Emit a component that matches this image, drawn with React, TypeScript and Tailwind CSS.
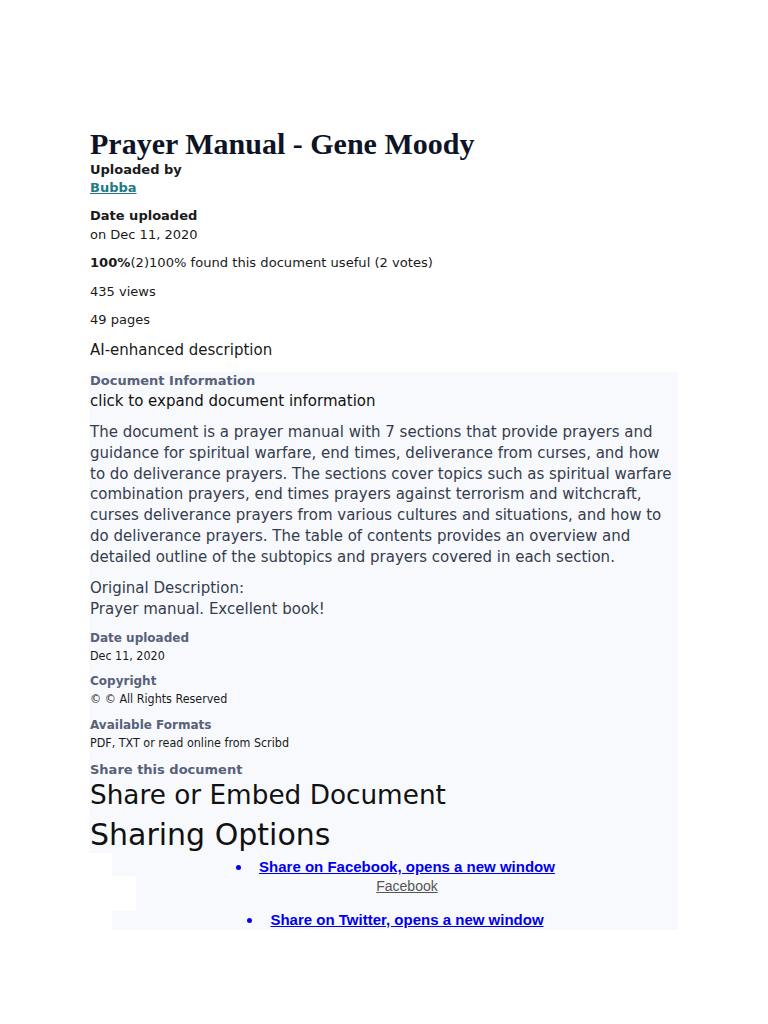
import React from "react";

const sans = { fontFamily: '"DejaVu Sans", sans-serif' };
const cond = { fontFamily: '"DejaVu Sans Condensed", "DejaVu Sans", sans-serif' };

export default function App() {
  return (
    <div className="min-h-[1024px] bg-white" style={sans}>
      <div className="pl-[90px] pr-[90px] pt-[128px]">
        <h1
          className="text-[30px] font-bold leading-[32px] text-[#0d1425]"
          style={{ fontFamily: '"Liberation Serif", serif' }}
        >
          Prayer Manual - Gene Moody
        </h1>
        <div className="mt-[1px] text-[13px] font-bold leading-[18px] text-[#1a1a1a]">Uploaded by</div>
        <a className="block text-[13px] font-bold leading-[18px] text-[#1e7b85] underline">Bubba</a>
        <div className="mt-[10px] text-[13px] font-bold leading-[18px] text-[#1a1a1a]">Date uploaded</div>
        <div className="text-[13px] leading-[19px] text-[#1a1a1a]">on Dec 11, 2020</div>
        <div className="mt-[9px] text-[13.1px] leading-[19px] text-[#1a1a1a]">
          <span className="font-bold">100%</span>(2)100% found this document useful (2 votes)
        </div>
        <div className="mt-[10px] text-[13px] leading-[19px] text-[#1a1a1a]">435 views</div>
        <div className="mt-[9px] text-[13px] leading-[19px] text-[#1a1a1a]">49 pages</div>
        <div className="mt-[11px] text-[15px] leading-[21px] text-[#1a1a1a]">AI-enhanced description</div>
      </div>
      <div className="ml-[89px] mt-[11px] w-[589px] bg-[#f8f9fc]">
        <div className="pl-[1px]">
          <div className="text-[13px] font-bold leading-[17px] text-[#57617a]">Document Information</div>
          <div className="mt-[2px] text-[15px] leading-[21px] text-[#111]">click to expand document information</div>
          <p className="mt-[10px] text-[15px] leading-[20.8px] text-[#343d4e]">
            The document is a prayer manual with 7 sections that provide prayers and guidance for spiritual warfare, end
            times, deliverance from curses, and how to do deliverance prayers. The sections cover topics such as
            spiritual warfare combination prayers, end times prayers against terrorism and witchcraft, curses
            deliverance prayers from various cultures and situations, and how to do deliverance prayers. The table of
            contents provides an overview and detailed outline of the subtopics and prayers covered in each section.
          </p>
          <div className="mt-[10px] text-[15px] leading-[21px] text-[#343d4e]">Original Description:</div>
          <div className="text-[15px] leading-[21px] text-[#343d4e]">Prayer manual. Excellent book!</div>
          <div className="mt-[10px] text-[12px] font-bold leading-[17px] text-[#57617a]">Date uploaded</div>
          <div className="text-[12.4px] leading-[18px] text-[#1a1a1a]" style={cond}>
            Dec 11, 2020
          </div>
          <div className="mt-[8px] text-[12px] font-bold leading-[17px] text-[#57617a]">Copyright</div>
          <div className="text-[12.4px] leading-[18px] text-[#1a1a1a]" style={cond}>
            © © All Rights Reserved
          </div>
          <div className="mt-[9px] text-[12px] font-bold leading-[17px] text-[#57617a]">Available Formats</div>
          <div className="text-[12.4px] leading-[18px] text-[#1a1a1a]" style={cond}>
            PDF, TXT or read online from Scribd
          </div>
          <div className="mt-[9px] text-[13px] font-bold leading-[17px] text-[#57617a]">Share this document</div>
          <div className="mt-[1px] text-[26.3px] leading-[33px] text-[#111]">Share or Embed Document</div>
          <div className="mt-[5px] text-[30px] leading-[36px] text-[#111]">Sharing Options</div>
        </div>
      </div>
      <div className="ml-[89px] flex w-[589px] bg-white">
        <div className="w-[23px] shrink-0" />
        <div className="flex flex-1 bg-[#f8f9fc]">
          <div className="mt-[23px] h-[35px] w-[24px] shrink-0 bg-white" />
          <ul
            className="flex-1 pt-[4px] text-center text-[15px] leading-[20px]"
            style={{ fontFamily: '"Liberation Sans", Arial, sans-serif' }}
          >
            <li className="list-none text-[15px] leading-[20px]">
              <span className="relative inline-block align-top">
                <span className="absolute left-[-23px] top-[8px] h-[5px] w-[5px] rounded-full bg-[#0000ee]" />
                <a className="text-[15px] font-bold leading-[20px] text-[#0000ee] underline">
                  Share on Facebook, opens a new window
                </a>
              </span>
              <div className="text-[14px] leading-[18px] text-[#555] underline">Facebook</div>
            </li>
            <li className="mt-[15px] list-none text-[15px] leading-[20px]">
              <span className="relative inline-block align-top">
                <span className="absolute left-[-23px] top-[8px] h-[5px] w-[5px] rounded-full bg-[#0000ee]" />
                <a className="text-[15px] font-bold leading-[20px] text-[#0000ee] underline">
                  Share on Twitter, opens a new window
                </a>
              </span>
            </li>
          </ul>
        </div>
      </div>
    </div>
  );
}
